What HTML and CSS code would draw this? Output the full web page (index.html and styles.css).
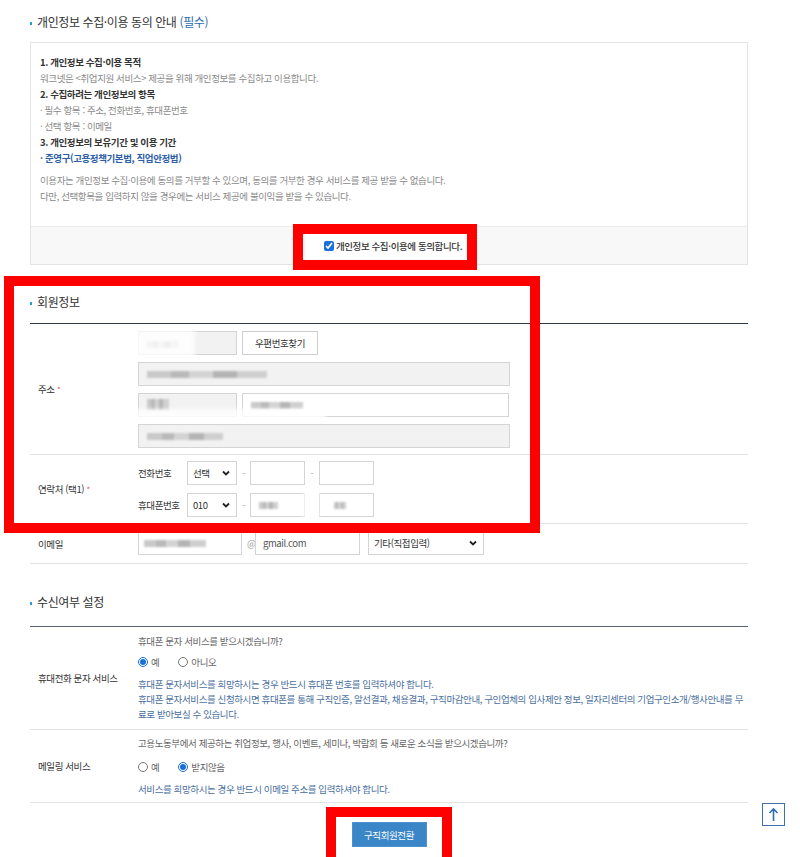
FILE: index.html
```html
<!DOCTYPE html>
<html lang="ko">
<head>
    <meta charset="UTF-8">
    <meta name="viewport" content="width=device-width, initial-scale=1.0">
    <title>구직회원전환</title>
    <link rel="stylesheet" href="styles.css">
</head>
<body>
    <div class="page">
        <div class="content">
            <h3 class="sec-title">개인정보 수집·이용 동의 안내 <em>(필수)</em></h3>
            <div class="agree-box">
                <div class="agree-body">
                    <p class="head">1. 개인정보 수집·이용 목적</p>
                    <p>워크넷은 &lt;취업지원 서비스&gt; 제공을 위해 개인정보를 수집하고 이용합니다.</p>
                    <p class="head">2. 수집하려는 개인정보의 항목</p>
                    <p>· 필수 항목 : 주소, 전화번호, 휴대폰번호</p>
                    <p>· 선택 항목 : 이메일</p>
                    <p class="head">3. 개인정보의 보유기간 및 이용 기간</p>
                    <p class="point">· 준영구(고용정책기본법, 직업안정법)</p>
                    <p class="note">이용자는 개인정보 수집·이용에 동의를 거부할 수 있으며, 동의를 거부한 경우 서비스를 제공 받을 수 없습니다.</p>
                    <p>다만, 선택항목을 입력하지 않을 경우에는 서비스 제공에 불이익을 받을 수 있습니다.</p>
                </div>
                <div class="agree-foot">
                    <label class="agree-check"><input type="checkbox" checked> 개인정보 수집·이용에 동의합니다.</label>
                </div>
            </div>

            <h3 class="sec-title member-title">회원정보</h3>
            <table class="form-table">
                <tr class="addr-row">
                    <th>주소 <span class="req">*</span></th>
                    <td>
                        <div class="line">
                            <div class="field ro zip"><span class="mask m-zip"></span><span class="smudge s-zip"></span></div>
                            <button type="button" class="btn-line">우편번호찾기</button>
                        </div>
                        <div class="line">
                            <div class="field ro full"><span class="mask m-addr1"></span></div>
                        </div>
                        <div class="line">
                            <div class="field ro zip"><span class="mask m-addr2"></span></div>
                            <div class="field detail"><span class="mask m-addr3"></span></div>
                            <span class="smudge s-addr"></span>
                        </div>
                        <div class="line">
                            <div class="field ro full"><span class="mask m-addr4"></span></div>
                        </div>
                    </td>
                </tr>
                <tr class="tel-row">
                    <th>연락처 (택1) <span class="req">*</span></th>
                    <td>
                        <div class="line tel-line">
                            <span class="sub-label">전화번호</span>
                            <div class="select-box">
                                <select><option>선택</option></select>
                                <svg class="chev" width="8" height="6" viewBox="0 0 8 6"><path d="M1 1.5L4 4.5L7 1.5" fill="none" stroke="#222" stroke-width="1.8"/></svg>
                            </div>
                            <span class="dash">-</span>
                            <div class="field num"></div>
                            <span class="dash wide">-</span>
                            <div class="field num"></div>
                        </div>
                        <div class="line tel-line">
                            <span class="sub-label">휴대폰번호</span>
                            <div class="select-box">
                                <select><option>010</option></select>
                                <svg class="chev" width="8" height="6" viewBox="0 0 8 6"><path d="M1 1.5L4 4.5L7 1.5" fill="none" stroke="#222" stroke-width="1.8"/></svg>
                            </div>
                            <span class="dash">-</span>
                            <div class="field num"><span class="mask m-mid"></span></div>
                            <span class="dash wide"></span>
                            <div class="field num"><span class="mask m-last"></span></div>
                            <span class="smudge s-tel"></span>
                        </div>
                    </td>
                </tr>
                <tr class="mail-row">
                    <th>이메일</th>
                    <td>
                        <div class="line">
                            <div class="field mail-id"><span class="mask m-mail"></span></div>
                            <span class="at">@</span>
                            <div class="field mail-domain">gmail.com</div>
                            <div class="select-box mail-select">
                                <select><option>기타(직접입력)</option></select>
                                <svg class="chev" width="8" height="6" viewBox="0 0 8 6"><path d="M1 1.5L4 4.5L7 1.5" fill="none" stroke="#222" stroke-width="1.8"/></svg>
                            </div>
                        </div>
                    </td>
                </tr>
            </table>

            <h3 class="sec-title recv-title">수신여부 설정</h3>
            <table class="form-table recv-table">
                <tr class="sms-row">
                    <th>휴대전화 문자 서비스</th>
                    <td>
                        <p class="ask">휴대폰 문자 서비스를 받으시겠습니까?</p>
                        <div class="radios">
                            <label class="radio"><input type="radio" name="sms" checked> 예</label>
                            <label class="radio"><input type="radio" name="sms"> 아니오</label>
                        </div>
                        <p class="guide">휴대폰 문자서비스를 희망하시는 경우 반드시 휴대폰 번호를 입력하셔야 합니다.<br>휴대폰 문자서비스를 신청하시면 휴대폰를 통해 구직인증, 알선결과, 채용결과, 구직마감안내, 구인업체의 입사제안 정보, 일자리센터의 기업구인소개/행사안내를 무료로 받아보실 수 있습니다.</p>
                    </td>
                </tr>
                <tr class="mailing-row">
                    <th>메일링 서비스</th>
                    <td>
                        <p class="ask">고용노동부에서 제공하는 취업정보, 행사, 이벤트, 세미나, 박람회 등 새로운 소식을 받으시겠습니까?</p>
                        <div class="radios">
                            <label class="radio"><input type="radio" name="mailing"> 예</label>
                            <label class="radio"><input type="radio" name="mailing" checked> 받지않음</label>
                        </div>
                        <p class="guide">서비스를 희망하시는 경우 반드시 이메일 주소를 입력하셔야 합니다.</p>
                    </td>
                </tr>
            </table>

            <div class="btn-area">
                <button type="button" class="btn-submit">구직회원전환</button>
            </div>
        </div>

        <a class="go-top" href="#">
            <svg width="21" height="21" viewBox="0 0 21 21"><path d="M10.5 5v12M6.5 9l4-4 4 4" fill="none" stroke="#2f6db5" stroke-width="1.6"/></svg>
        </a>

        <div class="mark mark-agree"></div>
        <div class="mark mark-member"></div>
        <div class="mark mark-submit"></div>
    </div>
</body>
</html>
```

FILE: styles.css
```css
body {
    margin: 0;
    font-family: "Noto Sans CJK KR", "Noto Sans", sans-serif;
    font-size: 9.5px;
    color: #555;
    background: #fff;
    letter-spacing: -0.4px;
}
.page {
    position: relative;
    width: 800px;
    height: 857px;
    overflow: hidden;
}
.content {
    padding: 14px 52px 0 30px;
}
p {
    margin: 0;
}

/* section titles */
.sec-title {
    position: relative;
    margin: 0;
    padding-left: 7px;
    font-size: 12px;
    line-height: 16px;
    font-weight: normal;
    color: #333;
}
.sec-title::before {
    content: "";
    position: absolute;
    left: 0;
    top: 8px;
    width: 2px;
    height: 3px;
    background: #1fa3dc;
}
.sec-title em {
    font-style: normal;
    color: #2d6bb5;
}
.member-title {
    margin-top: 29px;
}
.recv-title {
    margin-top: 30px;
}

/* agreement */
.agree-box {
    margin-top: 12px;
    border: 1px solid #e4e4e4;
}
.agree-body {
    padding: 11px 9px 22px;
    line-height: 16px;
    color: #8a8a8a;
}
.agree-body .head {
    color: #333;
    font-weight: bold;
}
.agree-body .point {
    color: #2d5ea8;
    font-weight: bold;
}
.agree-body .note {
    margin-top: 6px;
}
.agree-foot {
    display: flex;
    align-items: center;
    justify-content: center;
    height: 38px;
    box-sizing: border-box;
    background: #f8f8f8;
    border-top: 1px solid #ececec;
}
.agree-check {
    display: flex;
    align-items: center;
    gap: 2px;
    height: 27px;
    padding: 0 10px 0 18px;
    background: #fff;
    color: #333;
    font-weight: 500;
}
.agree-check input {
    width: 10px;
    height: 10px;
    margin: 0;
    accent-color: #1a6fd8;
}

/* form tables */
.form-table {
    width: 100%;
    border-collapse: collapse;
    border-top: 1px solid #2f3a46;
    margin-top: 13px;
}
.recv-table {
    margin-top: 16px;
    border-top-color: #59616b;
}
.form-table tr {
    border-bottom: 1px solid #e3e3e3;
}
.form-table th {
    width: 100px;
    padding: 0 0 0 8px;
    text-align: left;
    font-weight: normal;
    color: #333;
    vertical-align: middle;
}
.form-table td {
    padding: 0;
}
.req {
    color: #e0506a;
    font-size: 8px;
}
.addr-row td {
    padding: 7px 0 6px;
}
.tel-row td {
    padding: 6px 0;
}
.mail-row td {
    padding: 7px 0 8px;
}
.line {
    position: relative;
    display: flex;
    align-items: center;
    gap: 5px;
}
.line + .line {
    margin-top: 7px;
}
.tel-line {
    gap: 0;
}
.tel-line + .tel-line {
    margin-top: 8px;
}

.field {
    position: relative;
    height: 24px;
    box-sizing: border-box;
    border: 1px solid #d4d4d4;
    background: #fff;
    padding: 0 7px;
    line-height: 22px;
    color: #555;
}
.field.ro {
    background: #f2f2f2;
}
.zip {
    width: 99px;
}
.full {
    width: 372px;
}
.detail {
    width: 267px;
}
.num {
    width: 55px;
}
.mail-id {
    width: 104px;
}
.mail-domain {
    width: 105px;
}

.btn-line {
    width: 76px;
    height: 24px;
    border: 1px solid #cfcfcf;
    background: #fff;
    font-family: inherit;
    font-size: 9.5px;
    letter-spacing: -0.4px;
    color: #333;
    padding: 0;
}

.sub-label {
    width: 49px;
    color: #333;
}
.select-box {
    position: relative;
    width: 50px;
    height: 24px;
}
.select-box select {
    appearance: none;
    width: 100%;
    height: 100%;
    border: 1px solid #d4d4d4;
    background: #fff;
    padding: 0 5px;
    font-family: inherit;
    font-size: 9.5px;
    letter-spacing: -0.4px;
    color: #333;
}
.chev {
    position: absolute;
    right: 7px;
    top: 9px;
}
.mail-select {
    width: 116px;
    margin-left: 3px;
}
.dash {
    width: 13px;
    text-align: center;
    color: #aaa;
}
.dash.wide {
    width: 14px;
}
.at {
    width: 3px;
    text-align: center;
    color: #999;
}

/* privacy mosaic */
.mask {
    position: absolute;
    top: 8px;
    height: 7px;
    background: linear-gradient(90deg, #c9c9c9 0 20%, #b9b9b9 20% 35%, #d3d3d3 35% 55%, #b4b4b4 55% 75%, #cfcfcf 75%);
    filter: blur(1px);
}
.m-zip { left: 8px; width: 31px; top: 9px; }
.m-addr1 { left: 8px; width: 120px; }
.m-addr2 { left: 8px; width: 22px; top: 5px; height: 11px; }
.m-addr3 { left: 8px; width: 52px; }
.m-addr4 { left: 8px; width: 76px; }
.m-mid { left: 8px; width: 19px; }
.m-last { left: 14px; width: 12px; }
.m-mail { left: 5px; width: 62px; }
.smudge {
    position: absolute;
    background: rgba(255, 255, 255, 0.8);
    filter: blur(2px);
}
.s-zip {
    left: -6px;
    top: -3px;
    width: 62px;
    height: 30px;
}
.s-addr {
    left: -4px;
    top: 16px;
    width: 192px;
    height: 24px;
}
.s-tel {
    left: 165px;
    top: -2px;
    width: 16px;
    height: 28px;
}

/* receive options */
.sms-row td {
    padding: 7px 0;
}
.mailing-row td {
    padding: 6px 0 5px;
}
.ask {
    line-height: 15px;
    color: #666;
}
.radios {
    display: flex;
    height: 16px;
    align-items: center;
    margin-top: 5px;
    color: #666;
}
.mailing-row .radios {
    margin-top: 8px;
}
.radio {
    display: flex;
    align-items: center;
    gap: 3px;
    margin-right: 19px;
}
.radio input {
    width: 10px;
    height: 10px;
    margin: 0;
    accent-color: #1a6fd8;
}
.guide {
    margin-top: 7px;
    padding-right: 3px;
    line-height: 15px;
    color: #4a6f9e;
}

.btn-area {
    padding-top: 19px;
    text-align: center;
}
.btn-submit {
    width: 75px;
    height: 25px;
    border: 1px solid #4b93cf;
    background: #3a86c6;
    color: #fff;
    font-family: inherit;
    font-size: 9.5px;
    letter-spacing: -0.4px;
    padding: 0;
}

.go-top {
    position: absolute;
    left: 762px;
    top: 803px;
    display: flex;
    width: 23px;
    height: 23px;
    box-sizing: border-box;
    border: 1px solid #3f72aa;
    background: #fff;
    align-items: center;
    justify-content: center;
}

/* red highlight marks */
.mark {
    position: absolute;
    border: 10px solid #ff0000;
}
.mark-agree {
    left: 293px;
    top: 224px;
    width: 164px;
    height: 26px;
}
.mark-member {
    left: 4px;
    top: 276px;
    width: 516px;
    height: 237px;
}
.mark-submit {
    left: 326px;
    top: 807px;
    width: 106px;
    height: 46px;
}
```
